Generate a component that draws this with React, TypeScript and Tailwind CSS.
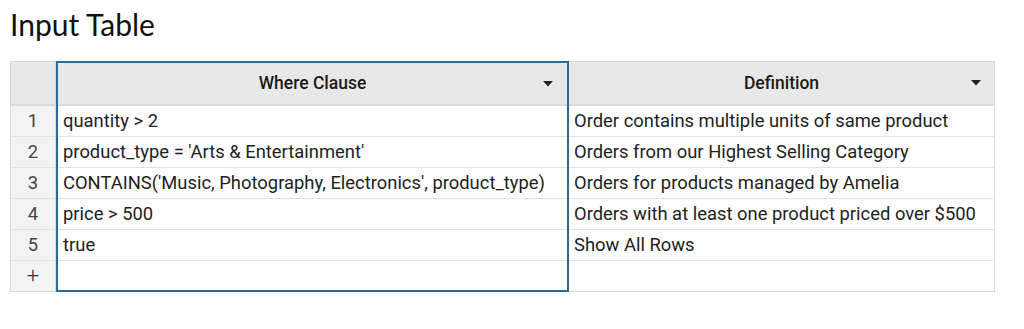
const rows = [
  { where: 'quantity > 2', def: 'Order contains multiple units of same product' },
  { where: "product_type = 'Arts & Entertainment'", def: 'Orders from our Highest Selling Category' },
  { where: "CONTAINS('Music, Photography, Electronics', product_type)", def: 'Orders for products managed by Amelia' },
  { where: 'price > 500', def: 'Orders with at least one product priced over $500' },
  { where: 'true', def: 'Show All Rows' },
]

function Caret() {
  return (
    <svg width="10" height="6" viewBox="0 0 10 6" className="shrink-0">
      <path d="M0 0 L10 0 L5 5.5 Z" fill="#222" />
    </svg>
  )
}

export default function App() {
  return (
    <div className="w-[1024px] h-[329px] bg-white px-[10px] pt-[4px]" style={{ fontFamily: 'Roboto, sans-serif' }}>
      <h1 className="text-[30px] leading-[40px] text-[#111]" style={{ fontFamily: 'Lato, sans-serif' }}>
        Input Table
      </h1>

      <div className="mt-[17px] flex w-[985px] border border-[#d8d8d8] text-[18.4px] text-[#1e1e1e]">
        {/* row numbers */}
        <div className="w-[45px] shrink-0 border-r border-[#d8d8d8] bg-[#f3f3f3]">
          <div className="h-[44px] border-b-2 border-[#dadada] bg-[#e8e8e8]" />
          {rows.map((_, i) => (
            <div key={i} className="flex h-[31px] items-center justify-center border-b border-[#e2e2e2] text-[#444]">
              {i + 1}
            </div>
          ))}
          <div className="flex h-[29px] items-center justify-center text-[22px] font-light text-[#333]">+</div>
        </div>

        {/* selected column */}
        <div className="w-[513px] shrink-0 border-2 border-[#2a6b9c] -mt-px -mb-px">
          <div className="flex h-[43px] items-center border-b-2 border-[#dadada] bg-[#e8e8e8] pl-[24px] pr-[14px]">
            <span className="flex-1 text-center text-[17.5px] font-medium text-[#1a1a1a]">Where Clause</span>
            <Caret />
          </div>
          {rows.map((r, i) => (
            <div key={i} className="flex h-[31px] items-center border-b border-[#e2e2e2] px-[5px] whitespace-nowrap">
              {r.where}
            </div>
          ))}
          <div className="h-[29px]" />
        </div>

        {/* definition */}
        <div className="flex-1">
          <div className="flex h-[44px] items-center border-b-2 border-[#dadada] bg-[#e8e8e8] pl-[23px] pr-[13px]">
            <span className="flex-1 text-center text-[17.5px] font-medium text-[#1a1a1a]">Definition</span>
            <Caret />
          </div>
          {rows.map((r, i) => (
            <div key={i} className="flex h-[31px] items-center border-b border-[#e2e2e2] px-[5px] whitespace-nowrap">
              {r.def}
            </div>
          ))}
          <div className="h-[29px]" />
        </div>
      </div>
    </div>
  )
}
